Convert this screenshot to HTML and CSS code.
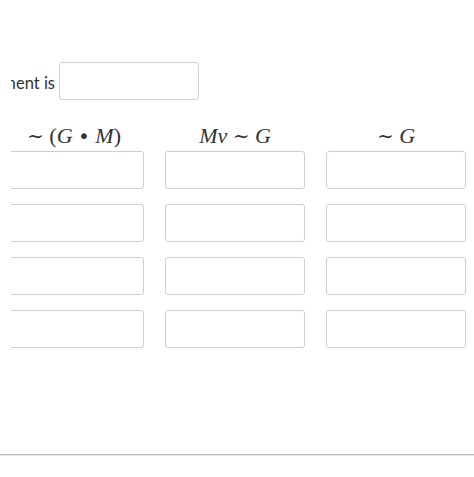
FILE: index.html
```html
<!DOCTYPE html>
<html>
<head>
<meta charset="utf-8">
<link rel="stylesheet" href="styles.css">
</head>
<body>
<div class="page">
  <div class="prompt">
    <div class="prompt-label"><span>The argument is</span></div>
    <div class="answer-input"></div>
  </div>
  <div class="table-clip">
    <div class="table">
      <div class="head-row">
        <div class="head"><span class="op">∼</span> <span class="up">(</span><span class="v">G</span> <span class="dot">•</span> <span class="v">M</span><span class="up">)</span></div>
        <div class="head"><span class="v">Mv</span> <span class="op">∼</span> <span class="v">G</span></div>
        <div class="head"><span class="op">∼</span> <span class="v">G</span></div>
      </div>
      <div class="rows">
        <div class="cell"></div><div class="cell"></div><div class="cell"></div>
        <div class="cell"></div><div class="cell"></div><div class="cell"></div>
        <div class="cell"></div><div class="cell"></div><div class="cell"></div>
        <div class="cell"></div><div class="cell"></div><div class="cell"></div>
      </div>
    </div>
  </div>
  <div class="rule"></div>
</div>
</body>
</html>
```

FILE: styles.css
```css
html, body {
  margin: 0;
  padding: 0;
  background: #ffffff;
}

.page {
  padding-top: 62px;
}

.prompt {
  display: flex;
  align-items: center;
  gap: 4px;
  padding-left: 11px;
}

.prompt-label {
  width: 44px;
  display: flex;
  justify-content: flex-end;
  overflow: hidden;
  white-space: nowrap;
  font-family: "Lato", "Liberation Sans", sans-serif;
  font-size: 16.5px;
  color: #333333;
  padding-top: 3px;
}

.answer-input {
  width: 140px;
  height: 38px;
  box-sizing: border-box;
  border: 1px solid #cfcfcf;
  border-radius: 3px;
  background: #fff;
}

.table-clip {
  margin-left: 11px;
  overflow: hidden;
  margin-top: 23px;
}

.table {
  margin-left: -7px;
}

.head-row,
.rows {
  display: grid;
  grid-template-columns: repeat(3, 140px);
  column-gap: 21px;
}

.head-row {
  height: 28px;
}

.head {
  text-align: center;
  font-family: "Liberation Serif", "DejaVu Serif", serif;
  font-size: 22px;
  line-height: 26px;
  color: #333333;
  white-space: nowrap;
}

.head .v {
  font-style: italic;
}

.head .op {
  font-family: "DejaVu Serif", serif;
  font-size: 20px;
}

.head .dot {
  font-family: "DejaVu Sans", sans-serif;
  font-size: 20px;
}

.rows {
  row-gap: 15px;
}

.cell {
  height: 38px;
  box-sizing: border-box;
  border: 1px solid #cfcfcf;
  border-radius: 3px;
  background: #fff;
}

.rule {
  margin-top: 106px;
  height: 1px;
  background: #bdbdbd;
  border-bottom: 1px solid #e8e8e8;
}
```
